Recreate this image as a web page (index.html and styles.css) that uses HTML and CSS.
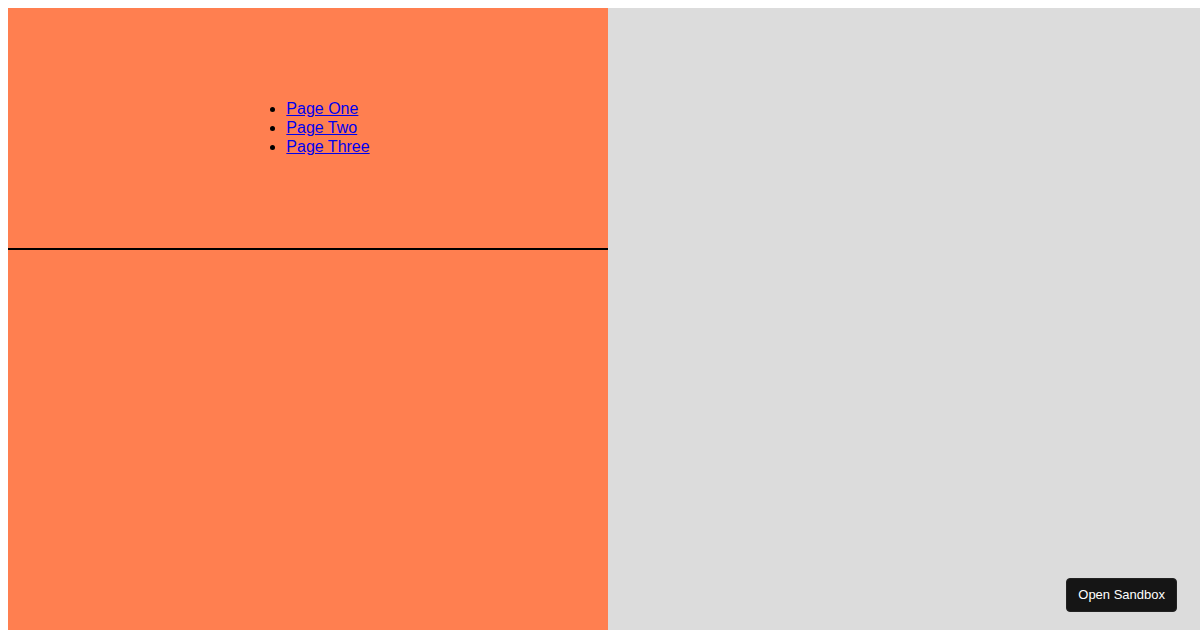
FILE: index.html
```html
<!DOCTYPE html>
<html lang="en">
<head>
  <meta charset="UTF-8" />
  <meta name="viewport" content="width=device-width, initial-scale=1.0"/>
  <title>Pages</title>
  <link rel="stylesheet" href="styles.css">
</head>
<body>
  <div class="container">
    <div class="left">
      <nav class="menu">
        <ul>
          <li><a href="#one">Page One</a></li>
          <li><a href="#two">Page Two</a></li>
          <li><a href="#three">Page Three</a></li>
        </ul>
      </nav>
    </div>
    <div class="right"></div>
  </div>

  <button class="open-sandbox" type="button">Open Sandbox</button>
</body>
</html>
```

FILE: styles.css
```css
body {
  margin: 8px 0 0 8px;
  font-family: "Liberation Sans", Arial, sans-serif;
  line-height: 19px;
}

.container {
  display: flex;
  height: 100vh;
}

.left {
  width: 50vw;
  background: coral;
}

.right {
  flex: 1;
  background: gainsboro;
}

.menu {
  display: flex;
  justify-content: center;
  align-items: center;
  height: 238px;
  padding-bottom: 2px;
  border-bottom: 2px solid black;
}

.menu a {
  color: #0000ee;
}

.open-sandbox {
  position: fixed;
  right: 23px;
  bottom: 18px;
  height: 34px;
  padding: 0 11px 2px;
  font-family: inherit;
  font-size: 13px;
  color: #fff;
  background: #151515;
  border: 1px solid #222;
  border-radius: 4px;
  cursor: pointer;
}

.open-sandbox:hover {
  background: #2a2a2a;
}
```
